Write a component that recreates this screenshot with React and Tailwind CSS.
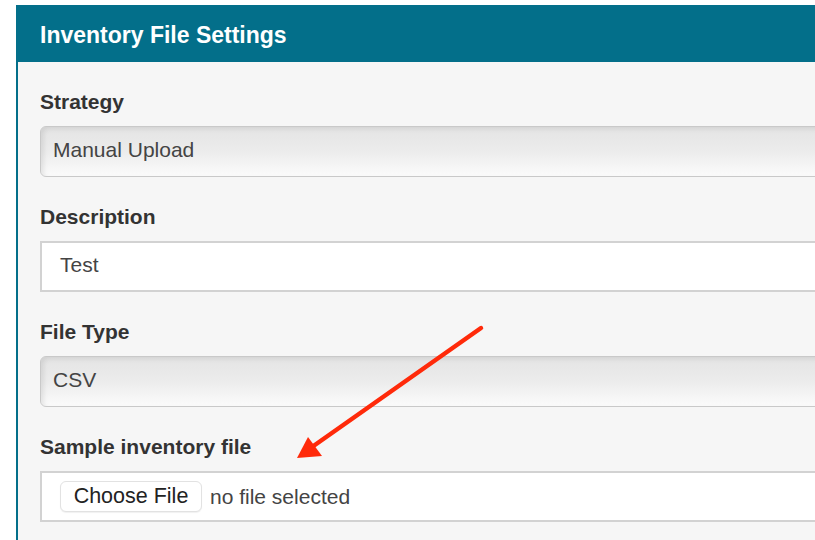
import React from 'react'

const font = { fontFamily: '"Liberation Sans", Arial, sans-serif' }

function Field({ label, children }) {
  return (
    <div className="flex flex-col">
      <label className="h-6 text-[21px] font-bold leading-6 text-[#333]">{label}</label>
      <div className="mt-3">{children}</div>
    </div>
  )
}

function DisabledSelect({ value }) {
  return (
    <div className="flex h-[51px] items-center rounded-md border border-[#c9c9c9] bg-gradient-to-b from-[#e4e4e4] via-[#ececec] to-[#fbfbfb] pb-[3px] pl-[12px] text-[21px] text-[#444] shadow-[inset_3px_2px_4px_rgba(0,0,0,0.08)]">
      {value}
    </div>
  )
}

function TextInput({ value }) {
  return (
    <div className="flex h-[51px] items-center border-2 border-[#d2d2d2] bg-white pb-[3px] pl-[18px] text-[21px] text-[#444]">
      {value}
    </div>
  )
}

function FileInput() {
  return (
    <div className="flex h-[51px] items-center border-2 border-[#d2d2d2] bg-white pl-[18px] text-[21px]">
      <button className="flex h-[31px] w-[142px] items-center justify-center rounded-md border border-[#e2e2e2] bg-white text-[21.5px] text-[#222] shadow-[0_1px_1px_rgba(0,0,0,0.06)]">
        Choose File
      </button>
      <span className="ml-2 text-[#444]">no file selected</span>
    </div>
  )
}

export default function App() {
  return (
    <div className="relative h-[540px] w-[815px] overflow-hidden bg-white pl-4 pt-[5px]" style={font}>
      <div className="w-[830px] border-l-2 border-[#036f8a] bg-[#f6f6f6]">
        <div className="flex h-[57px] items-center bg-[#036f8a] pl-[22px] pt-1 text-[23px] font-bold text-white">
          Inventory File Settings
        </div>
        <div className="flex flex-col gap-7 pl-[22px] pt-7 pb-10">
          <Field label="Strategy">
            <DisabledSelect value="Manual Upload" />
          </Field>
          <Field label="Description">
            <TextInput value="Test" />
          </Field>
          <Field label="File Type">
            <DisabledSelect value="CSV" />
          </Field>
          <Field label="Sample inventory file">
            <FileInput />
          </Field>
        </div>
      </div>

      <svg className="pointer-events-none absolute left-0 top-0" width="815" height="540">
        <line x1="481" y1="328" x2="312" y2="447" stroke="#ff2a0a" strokeWidth="4.5" strokeLinecap="round" />
        <polygon points="297,458 308,437 322,456" fill="#ff2a0a" />
      </svg>
    </div>
  )
}
